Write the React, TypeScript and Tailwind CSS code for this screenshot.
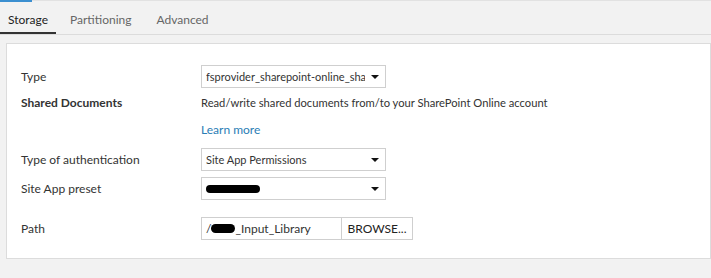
import React from "react";

const Caret = () => (
  <svg width="8" height="4" viewBox="0 0 8 4" className="shrink-0">
    <path d="M0 0 L8 0 L4 4 Z" fill="#111" />
  </svg>
);

const Select = ({ children }: { children: React.ReactNode }) => (
  <div className="flex h-[23px] w-[185px] items-center justify-between gap-[6px] border border-[#cfcfcf] bg-white pl-[4px] pr-[6px] text-[11px]">
    <div className="flex min-w-0 flex-1 items-center overflow-hidden whitespace-nowrap">{children}</div>
    <Caret />
  </div>
);

const Blob = ({ w, h }: { w: number; h: number }) => (
  <span className="inline-block shrink-0 rounded-full bg-black" style={{ width: w, height: h }} />
);

export default function App() {
  return (
    <div
      className="h-[278px] w-[711px] overflow-hidden bg-[#f2f2f2] text-[12px] leading-[18px] text-[#333]"
      style={{ fontFamily: "Lato, 'Open Sans', sans-serif" }}
    >
      <div className="relative h-[35px] border-b border-[#dcdcdc] border-t border-t-[#e2e2e2]">
        <div className="absolute left-0 top-[-1px] h-[2px] w-[32px] bg-[#3b8fd0]" />
        <div className="flex h-full items-stretch">
          <div className="flex w-[56px] items-center justify-center border-b-2 border-[#333] pt-[6px] text-[#222]">
            Storage
          </div>
          <div className="flex items-center pl-[14px] pt-[4px] text-[#666]">Partitioning</div>
          <div className="flex items-center pl-[25px] pt-[4px] text-[#666]">Advanced</div>
        </div>
      </div>
      <div className="ml-[6px] mt-[8px] h-[216px] border border-[#dcdcdc] bg-white pl-[14px] pt-[21px]">
        <div className="flex h-[23px] items-center">
          <div className="w-[180px]">Type</div>
          <Select>fsprovider_sharepoint-online_sha</Select>
        </div>
        <div className="mt-[6px] flex items-center">
          <div className="w-[180px] font-bold">Shared Documents</div>
          <div className="text-[11.2px]">Read/write shared documents from/to your SharePoint Online account</div>
        </div>
        <div className="mt-[9px] flex items-center">
          <div className="w-[180px]" />
          <div className="text-[#2a7db5]">Learn more</div>
        </div>
        <div className="mt-[9px] flex h-[23px] items-center">
          <div className="w-[180px]">Type of authentication</div>
          <Select>Site App Permissions</Select>
        </div>
        <div className="mt-[6px] flex h-[23px] items-center">
          <div className="w-[180px]">Site App preset</div>
          <Select>
            <Blob w={54} h={8} />
          </Select>
        </div>
        <div className="mt-[17px] flex h-[23px] items-center">
          <div className="w-[180px]">Path</div>
          <div className="flex h-[23px] w-[141px] items-center border border-[#cfcfcf] pl-[4px]">
            <span>/</span>
            <Blob w={24} h={9} />
            <span>_Input_Library</span>
          </div>
          <div className="flex h-[23px] w-[71px] items-center justify-center border border-l-0 border-[#cfcfcf] text-[#222]">
            BROWSE...
          </div>
        </div>
      </div>
    </div>
  );
}
